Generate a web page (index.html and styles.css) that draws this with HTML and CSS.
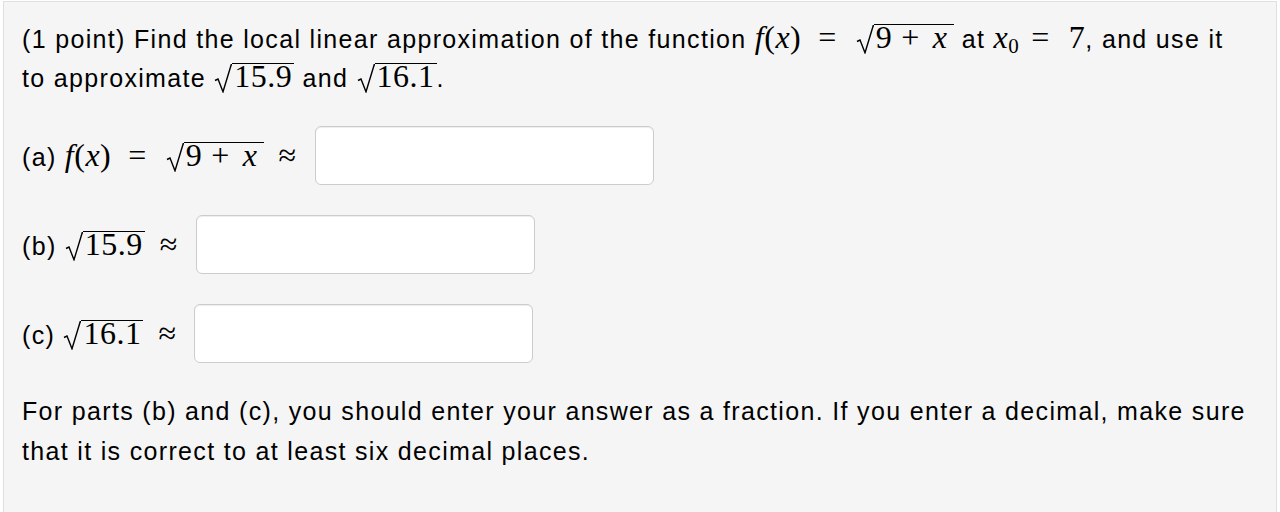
FILE: index.html
```html
<!DOCTYPE html>
<html lang="en">
<head>
<meta charset="utf-8">
<title>Local linear approximation</title>
<link rel="stylesheet" href="styles.css">
</head>
<body>
<div class="problem">
  <p class="intro">(1 point) Find the local linear approximation of the function <span class="m"><i>f</i>(<i>x</i>)<span class="rel">=</span><span class="sqrt"><svg class="rad" viewBox="0 0 18 29" width="18" height="29"><path d="M1 16.5 L4 15 L9 27.8 L17.2 0.7 L18 0.7"/></svg><span class="under">9<span class="bin">+</span><i>x</i></span></span></span> at <span class="m"><i>x</i><sub>0</sub><span class="rel rel-sub">=</span>7</span>, and use it to approximate <span class="m"><span class="sqrt"><svg class="rad" viewBox="0 0 18 29" width="18" height="29"><path d="M1 16.5 L4 15 L9 27.8 L17.2 0.7 L18 0.7"/></svg><span class="under num">15.9</span></span></span> and <span class="m"><span class="sqrt"><svg class="rad" viewBox="0 0 18 29" width="18" height="29"><path d="M1 16.5 L4 15 L9 27.8 L17.2 0.7 L18 0.7"/></svg><span class="under num">16.1</span></span></span>.</p>

  <div class="part part-a">
    <span class="label">(a) <span class="m"><i>f</i>(<i>x</i>)<span class="rel">=</span><span class="sqrt"><svg class="rad" viewBox="0 0 18 29" width="18" height="29"><path d="M1 16.5 L4 15 L9 27.8 L17.2 0.7 L18 0.7"/></svg><span class="under">9<span class="bin">+</span><i>x</i></span></span><span class="rel rel-end">≈</span></span></span>
    <input class="answer" type="text" aria-label="Answer a">
  </div>

  <div class="part">
    <span class="label">(b) <span class="m"><span class="sqrt"><svg class="rad" viewBox="0 0 18 29" width="18" height="29"><path d="M1 16.5 L4 15 L9 27.8 L17.2 0.7 L18 0.7"/></svg><span class="under num">15.9</span></span><span class="rel rel-end">≈</span></span></span>
    <input class="answer" type="text" aria-label="Answer b">
  </div>

  <div class="part">
    <span class="label">(c) <span class="m"><span class="sqrt"><svg class="rad" viewBox="0 0 18 29" width="18" height="29"><path d="M1 16.5 L4 15 L9 27.8 L17.2 0.7 L18 0.7"/></svg><span class="under num">16.1</span></span><span class="rel rel-end">≈</span></span></span>
    <input class="answer" type="text" aria-label="Answer c">
  </div>

  <p class="note">For parts (b) and (c), you should enter your answer as a fraction. If you enter a decimal, make sure that it is correct to at least six decimal places.</p>
</div>
</body>
</html>
```

FILE: styles.css
```css
html, body {
  margin: 0;
  padding: 0;
  background: #ffffff;
}

body {
  font-family: "Liberation Sans", Arial, sans-serif;
  font-size: 25px;
  letter-spacing: 1.33px;
  color: #000;
}

.problem {
  margin: 1px 3px 0 3px;
  border: 1px solid #e0e0e0;
  border-bottom: none;
  background: #f5f5f5;
  padding: 18px 28px 0 18px;
  height: 520px;
  box-sizing: border-box;
}

.intro {
  margin: 0;
  line-height: 39px;
}

.m {
  font-family: "Liberation Serif", "Times New Roman", serif;
  font-size: 32px;
  letter-spacing: 0.5px;
  line-height: 1;
  white-space: nowrap;
}

.m i {
  font-style: italic;
}

.m sub {
  font-size: 21px;
  line-height: 0;
  vertical-align: -5px;
}

.rel {
  margin: 0 19px 0 17px;
}

.rel-sub {
  margin-left: 12px;
}

.rel-end {
  margin-left: 15px;
  margin-right: 0;
}

.bin {
  margin: 0 13px 0 9px;
}

.sqrt {
  display: inline-block;
  white-space: nowrap;
}

.rad {
  vertical-align: -6px;
  fill: none;
  stroke: #000;
  stroke-width: 1.4;
  stroke-linejoin: miter;
}

.under {
  display: inline-block;
  line-height: 25px;
  border-top: 1.4px solid #000;
  padding: 0 6px 0 2px;
}

.under.num {
  padding-right: 2px;
}

.part {
  display: flex;
  align-items: center;
  gap: 18px;
  margin-top: 30px;
}

.part-a {
  margin-top: 28px;
}

.answer {
  box-sizing: border-box;
  width: 339px;
  height: 59px;
  border: 1px solid #cccccc;
  border-radius: 6px;
  background: #ffffff;
  box-shadow: inset 0 1px 1px rgba(0, 0, 0, 0.075);
  font-family: "Liberation Sans", Arial, sans-serif;
  font-size: 22px;
  padding: 4px 10px;
  margin: 0;
}

.note {
  margin: 28px 0 0 0;
  line-height: 40px;
}
```
